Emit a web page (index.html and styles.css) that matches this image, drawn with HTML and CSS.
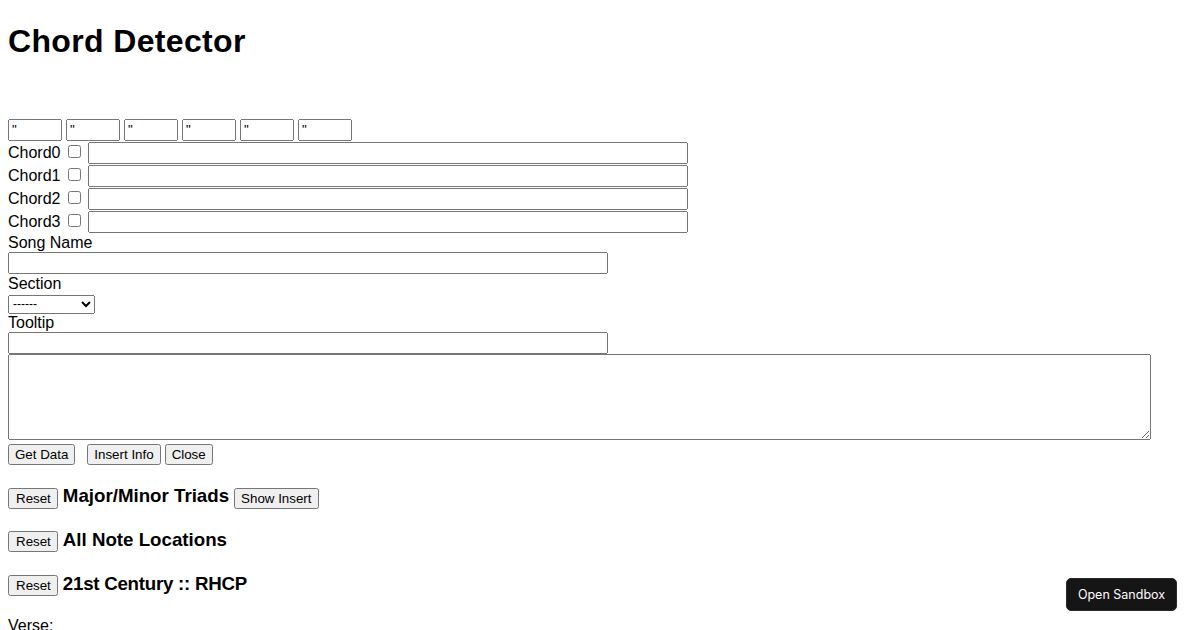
FILE: index.html
```html
<!DOCTYPE html>
<html>
<head>
<meta charset="utf-8">
<link rel="stylesheet" href="styles.css">
</head>
<body>
<h1>Chord Detector</h1>
<div class="spacer"></div>
<div class="strings">
<input class="str" value='"'> <input class="str" value='"'> <input class="str" value='"'> <input class="str" value='"'> <input class="str" value='"'> <input class="str" value='"'>
</div>
<div class="chord">Chord0 <input type="checkbox"> <input class="chord-input"></div>
<div class="chord">Chord1 <input type="checkbox"> <input class="chord-input"></div>
<div class="chord">Chord2 <input type="checkbox"> <input class="chord-input"></div>
<div class="chord">Chord3 <input type="checkbox"> <input class="chord-input"></div>
<div class="label">Song Name</div>
<input class="wide song">
<div class="label">Section</div>
<select class="section"><option>------</option></select>
<div class="label">Tooltip</div>
<input class="wide">
<textarea class="area"></textarea>
<div class="actions"><button class="getdata">Get Data</button><button>Insert Info</button><button>Close</button></div>
<h3 class="group"><button class="reset">Reset</button> Major/Minor Triads <button>Show Insert</button></h3>
<h3 class="group"><button class="reset">Reset</button> All Note Locations</h3>
<h3 class="group"><button class="reset">Reset</button> <span class="tight">21st Century :: RHCP</span></h3>
<p class="verse">Verse:</p>
<button class="sandbox">Open Sandbox</button>
</body>
</html>
```
FILE: styles.css
```css
body {
  margin: 0 8px 8px 8px;
  font-family: "Liberation Sans", Arial, sans-serif;
  font-size: 16px;
  color: #000;
  background: #fff;
}
h1 {
  font-size: 32px;
  letter-spacing: 0.35px;
  margin: 22.5px 0 21.44px 0;
}
.spacer {
  height: 38px;
}
input, select, textarea, button {
  font-family: "Liberation Sans", Arial, sans-serif;
  font-size: 13.33px;
}
.str {
  width: 54px;
  height: 22px;
  box-sizing: border-box;
  margin: 0;
}
.strings {
  height: 22px;
  margin-bottom: 1px;
  font-size: 0;
  display: flex;
  gap: 4px;
}
.chord {
  height: 23px;
  display: flex;
  align-items: center;
}
.chord input[type="checkbox"] {
  margin: 0 0 4px 8px;
  width: 13px;
  height: 13px;
  align-self: center;
}
.chord-input {
  width: 600px;
  height: 22px;
  box-sizing: border-box;
  margin: 0 0 0 7px;
}
.label {
  line-height: 18px;
}
.wide {
  display: block;
  width: 600px;
  height: 22px;
  box-sizing: border-box;
  margin: 0;
}
.song {
  margin-bottom: 1px;
}
.section {
  display: block;
  width: 87px;
  height: 19px;
  box-sizing: border-box;
  margin: 2px 0 0 0;
  font-size: 12px;
}
.area {
  display: block;
  width: 1143px;
  height: 86px;
  box-sizing: border-box;
  margin: 0;
}
.actions {
  margin-top: 4px;
  display: flex;
  gap: 4px;
}
.actions .getdata {
  margin-right: 8px;
}
.actions button, .group button {
  height: 21px;
  box-sizing: border-box;
  padding: 1px 5px;
  margin: 0;
}
.group .reset {
  padding: 1px 5px 1px 6px;
}
.group {
  font-size: 18.72px;
  margin: 18.72px 0;
  display: flex;
  align-items: center;
  gap: 5px;
}
.group .tight {
  letter-spacing: -0.25px;
}
.group button {
  font-weight: normal;
  margin-top: 4px;
}
.verse {
  margin: 21px 0 18px 0;
}
.sandbox {
  position: fixed;
  right: 23px;
  bottom: 19px;
  width: 111px;
  height: 33px;
  background: #151515;
  color: #fff;
  border: 1px solid #2a2a2a;
  border-radius: 5px;
  font-family: Inter, "Noto Sans", sans-serif;
  font-size: 12.5px;
  padding: 0;
}
```
